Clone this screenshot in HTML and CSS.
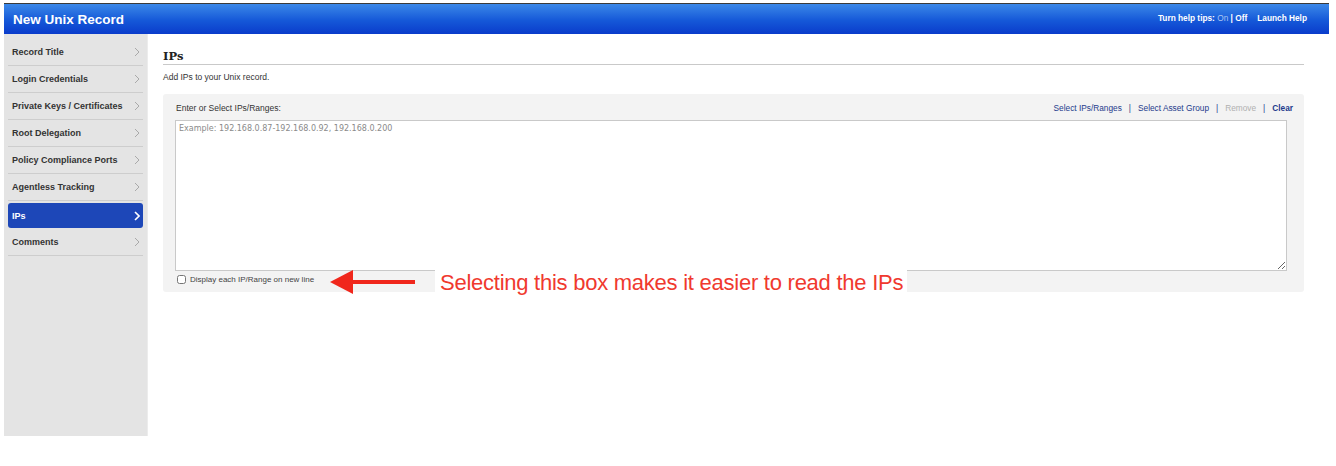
FILE: index.html
```html
<!DOCTYPE html>
<html lang="en">
<head>
<meta charset="utf-8">
<title>New Unix Record</title>
<link rel="stylesheet" href="styles.css">
</head>
<body>
<div class="frame">
  <header class="topbar">
    <h1 class="title">New Unix Record</h1>
    <div class="help">Turn help tips: <span class="on">On</span> | <b>Off</b><span class="launch">Launch Help</span></div>
  </header>
  <div class="body">
    <nav class="sidebar">
      <div class="item">Record Title<svg class="chev" viewBox="0 0 6 10"><polyline points="1,1 5,5 1,9"/></svg></div>
      <div class="item">Login Credentials<svg class="chev" viewBox="0 0 6 10"><polyline points="1,1 5,5 1,9"/></svg></div>
      <div class="item">Private Keys / Certificates<svg class="chev" viewBox="0 0 6 10"><polyline points="1,1 5,5 1,9"/></svg></div>
      <div class="item">Root Delegation<svg class="chev" viewBox="0 0 6 10"><polyline points="1,1 5,5 1,9"/></svg></div>
      <div class="item">Policy Compliance Ports<svg class="chev" viewBox="0 0 6 10"><polyline points="1,1 5,5 1,9"/></svg></div>
      <div class="item">Agentless Tracking<svg class="chev" viewBox="0 0 6 10"><polyline points="1,1 5,5 1,9"/></svg></div>
      <div class="item active">IPs<svg class="chev" viewBox="0 0 6 10"><polyline points="1,1 5,5 1,9"/></svg></div>
      <div class="item">Comments<svg class="chev" viewBox="0 0 6 10"><polyline points="1,1 5,5 1,9"/></svg></div>
    </nav>
    <main class="main">
      <h2 class="heading">IPs</h2>
      <p class="intro">Add IPs to your Unix record.</p>
      <section class="panel">
        <div class="panel-top">
          <span class="label">Enter or Select IPs/Ranges:</span>
          <span class="links"><a>Select IPs/Ranges</a><span class="sep">|</span><a>Select Asset Group</a><span class="sep">|</span><a class="disabled">Remove</a><span class="sep">|</span><a class="strong">Clear</a></span>
        </div>
        <textarea class="ips" placeholder="Example: 192.168.0.87-192.168.0.92, 192.168.0.200"></textarea>
        <label class="check"><input type="checkbox"><span>Display each IP/Range on new line</span></label>
        <svg class="arrow" viewBox="0 0 86 24"><polygon points="0,12 23,0 23,24"/><rect x="22" y="10" width="63" height="4"/></svg>
        <div class="note">Selecting this box makes it easier to read the IPs</div>
      </section>
    </main>
  </div>
</div>
</body>
</html>
```
FILE: styles.css
```css
* { box-sizing: border-box; }
html, body { margin: 0; padding: 0; background: #fff; }
body { font-family: "Liberation Sans", Arial, sans-serif; color: #333; }

.frame {
  margin: 3px 0 0 4px;
  width: 1325px;
  border-top: 1px solid #3a3a3a;
}

.topbar {
  height: 30px;
  background: linear-gradient(#3b88e8, #1558d8 55%, #0a3ccb);
  display: flex;
  align-items: center;
  justify-content: space-between;
  padding: 0 22px 0 9px;
}
.title {
  margin: 0;
  color: #fff;
  font-size: 13.5px;
  font-weight: bold;
}
.help {
  color: #fff;
  font-size: 8.3px;
  font-weight: bold;
  margin-top: -2px;
}
.help .on { color: #a9c5f2; font-weight: normal; }
.help .launch { margin-left: 10px; }

.body { display: flex; }

.sidebar {
  width: 144px;
  height: 402px;
  background: #e4e4e4;
  border-right: 1px solid #ececec;
  padding: 5px 4px 0 4px;
  flex-shrink: 0;
}
.item {
  height: 27px;
  border-bottom: 1px solid #cdcdcd;
  display: flex;
  align-items: center;
  justify-content: space-between;
  padding: 0 3px 0 4px;
  font-size: 9px;
  font-weight: bold;
  color: #333;
}
.chev {
  width: 6px;
  height: 10px;
  fill: none;
  stroke: #a9a9a9;
  stroke-width: 1;
}
.item.active {
  background: #1d47b8;
  color: #fff;
  border-radius: 3px;
  border-bottom: none;
  height: 25px;
  margin-top: 2px;
  margin-bottom: 1px;
}
.item.active .chev { stroke: #fff; stroke-width: 1.6; }

.main {
  flex: 1;
  padding: 0 25px 0 15px;
}
.heading {
  margin: 13px 0 0;
  height: 18px;
  border-bottom: 1px solid #c9c9c9;
  font-family: "DejaVu Serif", "Liberation Serif", serif;
  font-size: 11.5px;
  font-weight: bold;
  color: #222;
  line-height: 18px;
}
.intro {
  margin: 6px 0 0;
  font-size: 8.5px;
  line-height: 12px;
  color: #333;
}

.panel {
  position: relative;
  margin-top: 11px;
  height: 198px;
  background: #f3f3f3;
  border-radius: 3px;
  padding: 8px 11px 0 12px;
}
.panel-top {
  display: flex;
  justify-content: space-between;
  align-items: center;
  height: 12px;
  padding-left: 1px;
}
.label { font-size: 8.5px; color: #333; }
.links { font-size: 8.3px; color: #1e3b8c; }
.links a { color: #1e3b8c; }
.links a.disabled { color: #b0b0b0; }
.links a.strong { font-weight: bold; }
.links .sep { margin: 0 7px; color: #1e3b8c; }

.ips {
  display: block;
  margin-top: 6px;
  width: 1112px;
  height: 151px;
  border: 1px solid #c9c9c9;
  background: #fff;
  padding: 3px 3px;
  font-family: "DejaVu Sans", Verdana, sans-serif;
  font-size: 8px;
  resize: both;
}
.ips::placeholder { color: #8a8a8a; }

.check {
  display: flex;
  align-items: center;
  margin-top: 4px;
  padding-left: 2px;
  font-size: 8px;
  color: #444;
}
.check input {
  width: 9px;
  height: 9px;
  margin: 0 4px 0 0;
}

.arrow {
  position: absolute;
  left: 167px;
  top: 176px;
  width: 86px;
  height: 24px;
  fill: #f0271c;
}
.note {
  position: absolute;
  left: 272px;
  top: 174px;
  width: 472px;
  height: 29px;
  background: #fff;
  color: #f0392e;
  font-size: 22px;
  letter-spacing: -0.25px;
  line-height: 29px;
  padding-left: 5px;
  white-space: nowrap;
}
```
